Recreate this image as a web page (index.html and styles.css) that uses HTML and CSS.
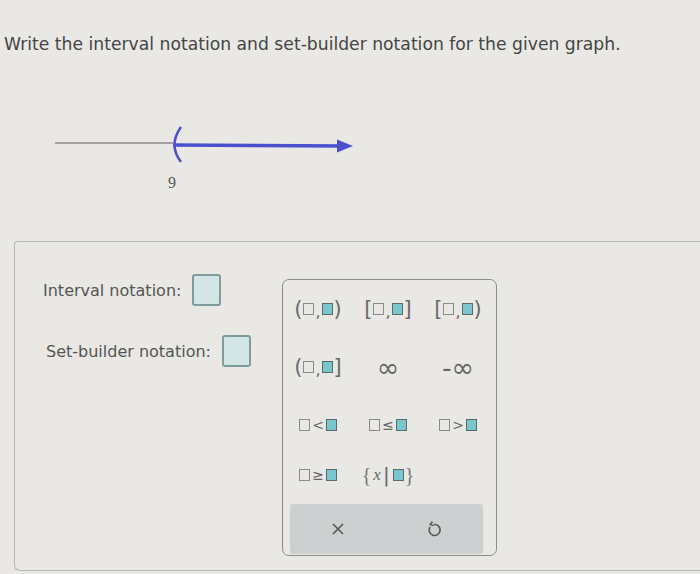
FILE: index.html
```html
<!DOCTYPE html>
<html>
<head>
<meta charset="utf-8">
<link rel="stylesheet" href="styles.css">
</head>
<body>
<p class="title">Write the interval notation and set-builder notation for the given graph.</p>
<svg class="graph" width="400" height="80" viewBox="0 0 400 80">
  <line x1="55" y1="23" x2="173" y2="23" stroke="#8a8a8a" stroke-width="1.5"/>
  <line x1="173" y1="25" x2="344" y2="26" stroke="#4b50cf" stroke-width="3.5"/>
  <path d="M337 19.5 L353 26 L337 32.5 Z" fill="#4b50cf"/>
  <path d="M181 7 Q168 25 181 42" fill="none" stroke="#4b50cf" stroke-width="2.5"/>
  <text x="168" y="68" class="tick">9</text>
</svg>
<div class="panel">
  <div class="fields">
    <div class="field"><span class="label">Interval notation:</span><span class="box"></span></div>
    <div class="field"><span class="label">Set-builder notation:</span><span class="box"></span></div>
  </div>
  <div class="palette">
    <div class="keys">
      <div class="key"><span class="br">(</span><span class="sq"></span><span class="cm">,</span><span class="sq fill"></span><span class="br">)</span></div>
      <div class="key"><span class="br">[</span><span class="sq"></span><span class="cm">,</span><span class="sq fill"></span><span class="br">]</span></div>
      <div class="key"><span class="br">[</span><span class="sq"></span><span class="cm">,</span><span class="sq fill"></span><span class="br">)</span></div>
      <div class="key"><span class="br">(</span><span class="sq"></span><span class="cm">,</span><span class="sq fill"></span><span class="br">]</span></div>
      <div class="key"><span class="inf">∞</span></div>
      <div class="key"><span class="inf">-∞</span></div>
      <div class="key"><span class="sq"></span><span class="op">&lt;</span><span class="sq fill"></span></div>
      <div class="key"><span class="sq"></span><span class="op">≤</span><span class="sq fill"></span></div>
      <div class="key"><span class="sq"></span><span class="op">&gt;</span><span class="sq fill"></span></div>
      <div class="key short"><span class="sq"></span><span class="op">≥</span><span class="sq fill"></span></div>
      <div class="key short"><span class="brace">{</span><span class="var">x</span><span class="bar">|</span><span class="sq fill"></span><span class="brace">}</span></div>
    </div>
    <div class="actions">
      <span class="act">
        <svg width="14" height="14" viewBox="0 0 14 14"><path d="M2 2 L12 12 M12 2 L2 12" stroke="#555" stroke-width="1.6" fill="none"/></svg>
      </span>
      <span class="act">
        <svg width="18" height="18" viewBox="0 0 18 18"><path d="M8 4.5 A5.5 5.5 0 1 1 4 7" stroke="#555" stroke-width="1.6" fill="none"/><path d="M6.5 1.8 L4.2 4.6 L7.6 5.6" stroke="#555" stroke-width="1.6" fill="none" stroke-linejoin="round"/></svg>
      </span>
    </div>
  </div>
</div>
</body>
</html>
```
FILE: styles.css
```css
html, body {
  margin: 0;
  padding: 0;
  background: #e9e8e4;
  height: 574px;
  overflow: hidden;
}
body {
  font-family: "DejaVu Sans", Verdana, sans-serif;
  color: #4a4a4a;
}
.title {
  margin: 0;
  padding: 34px 0 0 4px;
  font-size: 17.2px;
  line-height: 21px;
  color: #454545;
}
.graph {
  display: block;
  margin-top: 65px;
}
.tick {
  font-family: "Liberation Serif", serif;
  font-size: 16px;
  fill: #555;
}
.panel {
  box-sizing: border-box;
  margin: 41px 0 0 14px;
  height: 330px;
  border: 1px solid #b8b8b5;
  border-right: none;
  border-radius: 4px 0 0 6px;
  display: flex;
  padding: 32px 0 0 28px;
}
.fields {
  width: 239px;
  display: flex;
  flex-direction: column;
  gap: 29px;
}
.field {
  display: flex;
  align-items: center;
  gap: 11px;
}
.field:nth-child(2) {
  padding-left: 3px;
}
.label {
  font-size: 16px;
  color: #555;
}
.box {
  box-sizing: border-box;
  width: 29px;
  height: 32px;
  border: 2px solid #7d9c9c;
  background: #d3e6e5;
  border-radius: 3px;
}
.palette {
  box-sizing: border-box;
  margin-top: 5px;
  width: 215px;
  height: 277px;
  border: 1.5px solid #8c8c8c;
  border-radius: 7px;
  display: flex;
  flex-direction: column;
}
.keys {
  display: grid;
  grid-template-columns: repeat(3, 70px);
  grid-template-rows: 58px 58px 58px 42px;
}
.key {
  display: flex;
  align-items: center;
  justify-content: center;
  color: #666;
}
.br {
  font-size: 21px;
  line-height: 1;
  font-family: "DejaVu Sans", sans-serif;
  color: #6b6b6b;
}
.cm {
  font-size: 16px;
  margin: 4px 0 0;
  color: #666;
}
.sq {
  box-sizing: border-box;
  display: inline-block;
  width: 11px;
  height: 12px;
  border: 1.8px solid #8a8a8a;
  margin: 0 1px;
}
.sq.fill {
  background: #79c7cd;
  border-color: #5b6b6b;
}
.inf {
  font-size: 27px;
  line-height: 1;
  color: #666;
  font-family: "DejaVu Sans", sans-serif;
}
.op {
  font-size: 14px;
  color: #666;
  margin: 0 1px;
}
.brace {
  font-family: "Liberation Serif", serif;
  font-size: 20px;
  color: #777;
}
.var {
  font-family: "Liberation Serif", serif;
  font-style: italic;
  font-size: 17px;
  color: #666;
  margin: 0 2px;
}
.bar {
  font-size: 20px;
  color: #666;
  margin-right: 2px;
}
.actions {
  margin: 8px 13px 0 7px;
  height: 50px;
  background: #cdd0d0;
  border-radius: 3px;
  display: flex;
}
.act {
  flex: 1;
  display: flex;
  align-items: center;
  justify-content: center;
}
.act svg {
  display: block;
}
```
